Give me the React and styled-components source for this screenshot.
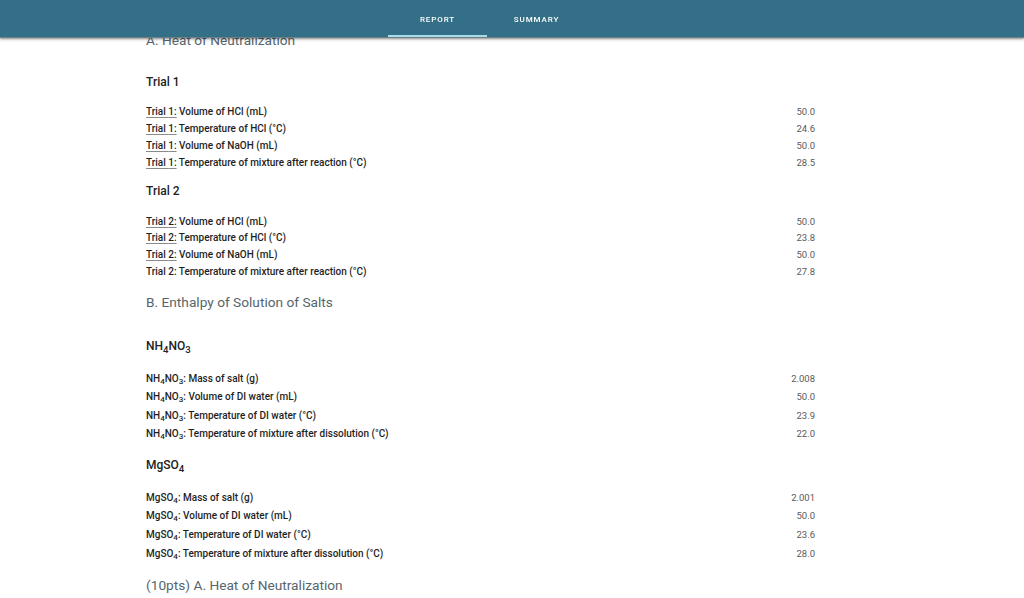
import React from "react";
import styled, { createGlobalStyle } from "styled-components";

const Global = createGlobalStyle`
  html, body { margin: 0; padding: 0; background: #fff; }
  body { font-family: Roboto, "Noto Sans", "Liberation Sans", sans-serif; overflow: hidden; }
`;

const Header = styled.header`
  position: fixed;
  top: 0; left: 0; right: 0;
  height: 37px;
  background: #336f87;
  border-bottom: 1px solid #6f7f86;
  box-shadow: 0 1px 2px rgba(0,0,0,0.35), 0 2px 3px rgba(0,0,0,0.12);
  display: flex;
  padding-left: 388px;
  z-index: 2;
`;

const Tab = styled.div`
  width: 99px;
  height: 37px;
  box-sizing: border-box;
  display: flex;
  align-items: center;
  justify-content: center;
  padding-top: 4px;
  color: #fff;
  font-size: 8px;
  font-weight: 500;
  letter-spacing: 0.9px;
  border-bottom: 2px solid ${p => (p.$active ? "#a9dcea" : "transparent")};
`;

const Page = styled.main`
  padding-left: 146px;
  width: 669px;
  padding-top: 30px;
`;

const Title = styled.h2`
  margin: ${p => p.$mt || 0}px 0 0 0;
  height: 20px;
  line-height: 20px;
  font-size: 13.7px;
  font-weight: 400;
  color: #56656b;
`;

const Heading = styled.h3`
  margin: ${p => p.$mt || 0}px 0 0 0;
  height: 20px;
  line-height: 20px;
  font-size: 12px;
  font-weight: 500;
  color: #222;
`;

const Rows = styled.div`
  margin-top: ${p => p.$mt || 0}px;
  display: flex;
  flex-direction: column;
`;

const Row = styled.div`
  display: flex;
  justify-content: space-between;
  align-items: center;
  height: ${p => (p.$tall ? 18.6 : 16.8)}px;
  font-size: 10px;
`;

const Label = styled.span`
  font-weight: 500;
  color: #1f1f1f;
`;

const Prefix = styled.span`
  text-decoration: ${p => (p.$under ? "underline" : "none")};
  text-decoration-color: #8a8a8a;
  text-underline-offset: 1.5px;
`;

const Value = styled.span`
  color: #5a5a5a;
  font-weight: 400;
  font-size: 9.5px;
  width: 40px;
  text-align: right;
`;

const Sub = styled.sub`
  font-size: 0.8em;
  line-height: 0;
  vertical-align: -0.3em;
`;

const NH4NO3 = () => (
  <>NH<Sub>4</Sub>NO<Sub>3</Sub></>
);
const MgSO4 = () => (
  <>MgSO<Sub>4</Sub></>
);

const trial = (vals, lastUnder) => [
  ["Volume of HCl (mL)", vals[0], true],
  ["Temperature of HCl (°C)", vals[1], true],
  ["Volume of NaOH (mL)", vals[2], true],
  ["Temperature of mixture after reaction (°C)", vals[3], lastUnder],
];

const saltRows = vals => [
  ["Mass of salt (g)", vals[0]],
  ["Volume of DI water (mL)", vals[1]],
  ["Temperature of DI water (°C)", vals[2]],
  ["Temperature of mixture after dissolution (°C)", vals[3]],
];

function TrialBlock({ n, vals, lastUnder, mt }) {
  return (
    <>
      <Heading $mt={mt}>Trial {n}</Heading>
      <Rows $mt={11.5}>
        {trial(vals, lastUnder).map(([t, v, u], i) => (
          <Row key={i}>
            <Label>
              <Prefix $under={u}>Trial {n}:</Prefix> {t}
            </Label>
            <Value>{v}</Value>
          </Row>
        ))}
      </Rows>
    </>
  );
}

function SaltBlock({ Name, vals, mt }) {
  return (
    <>
      <Heading $mt={mt}><Name /></Heading>
      <Rows $mt={12.7}>
        {saltRows(vals).map(([t, v], i) => (
          <Row key={i} $tall>
            <Label>
              <Name />: {t}
            </Label>
            <Value>{v}</Value>
          </Row>
        ))}
      </Rows>
    </>
  );
}

export default function App() {
  return (
    <>
      <Global />
      <Header>
        <Tab $active>REPORT</Tab>
        <Tab>SUMMARY</Tab>
      </Header>
      <Page>
        <Title>A. Heat of Neutralization</Title>
        <TrialBlock n={1} vals={["50.0", "24.6", "50.0", "28.5"]} lastUnder mt={22} />
        <TrialBlock n={2} vals={["50.0", "23.8", "50.0", "27.8"]} lastUnder={false} mt={10.5} />
        <Title $mt={12.3}>B. Enthalpy of Solution of Salts</Title>
        <SaltBlock Name={NH4NO3} vals={["2.008", "50.0", "23.9", "22.0"]} mt={24} />
        <SaltBlock Name={MgSO4} vals={["2.001", "50.0", "23.6", "28.0"]} mt={12} />
        <Title $mt={13}>(10pts) A. Heat of Neutralization</Title>
      </Page>
    </>
  );
}
